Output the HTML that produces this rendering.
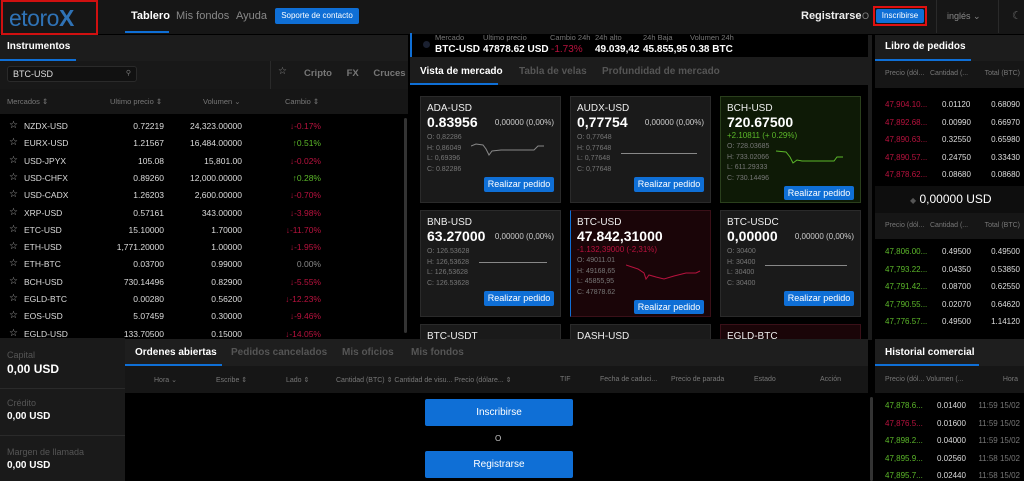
<!DOCTYPE html>
<html><head><meta charset="utf-8"><style>
*{box-sizing:border-box;margin:0;padding:0}
body{width:1024px;height:481px;overflow:hidden;background:#000;font-family:"Liberation Sans",sans-serif;color:#ddd;position:relative;font-size:9px}
.a{position:absolute}
.hdr{left:0;top:0;width:1024px;height:34px;background:#161616}
.nav{top:10px;font-size:11px;color:#888}
.btn{background:#0f6fd6;color:#fff;text-align:center;border-radius:2px}
.panel{background:#1c1c1c}
.red{color:#b8123e}.grn{color:#5cb82a}
.gray{color:#777}
.card{width:141px;height:107px;background:#1a1a1a;border:1px solid #2a2a2a}
.card .t{position:absolute;left:6px;top:6px;font-size:10px;color:#eee}
.card .p{position:absolute;left:6px;top:17px;font-size:14px;font-weight:bold;color:#fff}
.card .c{position:absolute;right:6px;top:21px;font-size:8px;color:#ccc}
.card .o{position:absolute;left:6px;font-size:7px;color:#777;line-height:10.7px}
.card .b{position:absolute;right:6px;width:70px;height:15px;font-size:9px;line-height:15px}
.row{position:absolute;left:0;width:408px;height:17px;font-size:8.5px}
.row span{position:absolute}
</style></head><body>
<div class="a hdr"></div>
<div class="a" style="left:1px;top:0;width:97px;height:35px;border:2px solid #d01010"></div>
<div class="a" style="left:9px;top:5px;font-size:23px;color:#2f72b5;letter-spacing:-0.5px">etoro<span style="font-weight:bold;color:#2f72b5">X</span></div>
<div class="a nav" style="left:131px;color:#fff;font-weight:bold">Tablero</div>
<div class="a" style="left:125px;top:31px;width:44px;height:2px;background:#0f6fd6"></div>
<div class="a nav" style="left:176px">Mis fondos</div>
<div class="a nav" style="left:236px">Ayuda</div>
<div class="a btn" style="left:275px;top:8px;width:84px;height:16px;font-size:8px;line-height:16px">Soporte de contacto</div>
<div class="a" style="left:801px;top:10px;font-size:11px;font-weight:bold;color:#eee">Registrarse</div>
<div class="a" style="left:862px;top:11px;font-size:9px;color:#888">O</div>
<div class="a" style="left:873px;top:6px;width:54px;height:20px;border:2px solid #e01010"></div>
<div class="a btn" style="left:876px;top:9px;width:48px;height:14px;font-size:8px;line-height:14px">Inscribirse</div>
<div class="a" style="left:936px;top:0;width:1px;height:33px;background:#2a2a2a"></div>
<div class="a" style="left:947px;top:11px;font-size:9px;color:#888">inglés ⌄</div>
<div class="a" style="left:998px;top:0;width:1px;height:33px;background:#2a2a2a"></div>
<div class="a" style="left:1012px;top:9px;font-size:11px;color:#666">☾</div>

<!-- left panel -->
<div class="a panel" style="left:0;top:35px;width:408px;height:54px"></div>
<div class="a" style="left:7px;top:41px;font-size:10px;font-weight:bold;color:#fff">Instrumentos</div>
<div class="a" style="left:0;top:59px;width:76px;height:2px;background:#0f6fd6"></div>
<div class="a" style="left:0;top:61px;width:408px;height:28px;background:#181818"></div>
<div class="a" style="left:7px;top:66px;width:130px;height:16px;background:#111;border:1px solid #2a2a2a;border-radius:3px;font-size:9px;color:#ddd;padding:2px 5px">BTC-USD<span style="float:right;color:#777;font-size:7px">⚲</span></div>
<div class="a" style="left:270px;top:61px;width:1px;height:28px;background:#2a2a2a"></div>
<div class="a" style="left:278px;top:66px;font-size:10px;color:#888">☆</div>
<div class="a" style="left:304px;top:68px;font-size:9.5px;color:#777;font-weight:bold;word-spacing:12px">Cripto FX Cruces</div>
<div class="a" style="left:0;top:89px;width:408px;height:25px;background:#161616"></div>
<div class="a gray" style="left:7px;top:97px;font-size:7.5px">Mercados ⇕</div>
<div class="a gray" style="left:110px;top:97px;font-size:7.5px">Ultimo precio ⇕</div>
<div class="a gray" style="left:203px;top:97px;font-size:7.5px">Volumen ⌄</div>
<div class="a gray" style="left:285px;top:97px;font-size:7.5px">Cambio ⇕</div>
<div class="a" style="left:404px;top:118px;width:3px;height:215px;background:#333;border-radius:2px"></div>

<div id="rows" class="a" style="left:0;top:0;width:408px;height:338px;overflow:hidden"></div>
<script>
var d=[["NZDX-USD","0.72219","24,323.00000","-0.17%",0],["EURX-USD","1.21567","16,484.00000","0.51%",1],["USD-JPYX","105.08","15,801.00","-0.02%",0],["USD-CHFX","0.89260","12,000.00000","0.28%",1],["USD-CADX","1.26203","2,600.00000","-0.70%",0],["XRP-USD","0.57161","343.00000","-3.98%",0],["ETC-USD","15.10000","1.70000","-11.70%",0],["ETH-USD","1,771.20000","1.00000","-1.95%",0],["ETH-BTC","0.03700","0.99000","0.00%",2],["BCH-USD","730.14496","0.82900","-5.55%",0],["EGLD-BTC","0.00280","0.56200","-12.23%",0],["EOS-USD","5.07459","0.30000","-9.46%",0],["EGLD-USD","133.70500","0.15000","-14.05%",0]];
var h="";d.forEach(function(r,i){var y=121+i*17.3;var c=r[4]==0?"#b8123e":r[4]==1?"#5cb82a":"#888";var ar=r[4]==0?"↓":r[4]==1?"↑":"";
h+='<div class="row" style="top:'+y+'px"><span style="left:9px;color:#aaa;font-size:10px;top:-1px">☆</span><span style="left:24px;color:#ddd">'+r[0]+'</span><span style="right:244px;color:#ddd">'+r[1]+'</span><span style="right:166px;color:#ddd">'+r[2]+'</span><span style="right:87px;color:'+c+'">'+ar+r[3]+'</span></div>';});
document.getElementById("rows").innerHTML=h;
</script>

<!-- middle ticker -->
<div class="a" style="left:410px;top:33px;width:2px;height:24px;background:#0f6fd6"></div>
<div class="a" style="left:423px;top:41px;width:7px;height:7px;border-radius:50%;background:#1a2030"></div>
<div class="a gray" style="left:435px;top:33px;font-size:7.5px">Mercado</div>
<div class="a gray" style="left:483px;top:33px;font-size:7.5px">Ultimo precio</div>
<div class="a gray" style="left:550px;top:33px;font-size:7.5px">Cambio 24h</div>
<div class="a gray" style="left:595px;top:33px;font-size:7.5px">24h alto</div>
<div class="a gray" style="left:643px;top:33px;font-size:7.5px">24h Baja</div>
<div class="a gray" style="left:690px;top:33px;font-size:7.5px">Volumen 24h</div>
<div class="a" style="left:435px;top:44px;font-size:10px;font-weight:bold;color:#fff">BTC-USD</div>
<div class="a" style="left:483px;top:44px;font-size:10px;font-weight:bold;color:#fff">47878.62 USD</div>
<div class="a red" style="left:551px;top:44px;font-size:10px">-1.73%</div>
<div class="a" style="left:595px;top:44px;font-size:10px;font-weight:bold;color:#fff">49.039,42</div>
<div class="a" style="left:643px;top:44px;font-size:10px;font-weight:bold;color:#fff">45.855,95</div>
<div class="a" style="left:690px;top:44px;font-size:10px;font-weight:bold;color:#fff">0.38 BTC</div>
<div class="a panel" style="left:410px;top:57px;width:458px;height:28px"></div>
<div class="a" style="left:420px;top:66px;font-size:10px;font-weight:bold;color:#fff">Vista de mercado</div>
<div class="a" style="left:410px;top:83px;width:88px;height:2px;background:#0f6fd6"></div>
<div class="a" style="left:519px;top:66px;font-size:10px;font-weight:bold;color:#555">Tabla de velas</div>
<div class="a" style="left:602px;top:66px;font-size:10px;font-weight:bold;color:#555">Profundidad de mercado</div>
<div class="a" style="left:868px;top:35px;width:4px;height:305px;background:#1c1c1c"></div>

<!-- cards -->
<div class="a card" style="left:420px;top:96px"><div class="t">ADA-USD</div><div class="p">0.83956</div><div class="c">0,00000 (0,00%)</div><div class="o" style="top:36px">O: 0,82286<br>H: 0,86049<br>L: 0,69396<br>C: 0.82286</div><svg class="a" style="left:50px;top:44px" width="80" height="20"><polyline points="0,5 5,3 12,4 15,8 18,14 21,10 30,9 45,9 63,9 67,5 73,5" fill="none" stroke="#888" stroke-width="1"/></svg><div class="btn b" style="top:80px">Realizar pedido</div></div>
<div class="a card" style="left:570px;top:96px"><div class="t">AUDX-USD</div><div class="p">0,77754</div><div class="c">0,00000 (0,00%)</div><div class="o" style="top:36px">O: 0,77648<br>H: 0,77648<br>L: 0,77648<br>C: 0,77648</div><div class="a" style="left:50px;top:56px;width:76px;height:1px;background:#888"></div><div class="btn b" style="top:80px">Realizar pedido</div></div>
<div class="a card" style="left:720px;top:96px;background:#0e1a06;border-color:#2a3f1c"><div class="t">BCH-USD</div><div class="p">720.67500</div><div class="c" style="left:6px;right:auto;top:34px;color:#5cb82a">+2.10811 (+ 0.29%)</div><div class="o" style="top:45px">O: 728.03685<br>H: 733.02066<br>L: 611.29333<br>C: 730.14496</div><svg class="a" style="left:55px;top:52px" width="80" height="20"><polyline points="0,2 10,3 14,8 17,14 21,11 26,12 50,12 58,12 61,8 67,8" fill="none" stroke="#5cb82a" stroke-width="1"/></svg><div class="btn b" style="top:89px;height:14px">Realizar pedido</div></div>

<div class="a card" style="left:420px;top:210px"><div class="t">BNB-USD</div><div class="p">63.27000</div><div class="c">0,00000 (0,00%)</div><div class="o" style="top:36px">O: 126.53628<br>H: 126,53628<br>L: 126,53628<br>C: 126.53628</div><div class="a" style="left:58px;top:51px;width:68px;height:1px;background:#888"></div><div class="btn b" style="top:80px">Realizar pedido</div></div>
<div class="a card" style="left:570px;top:210px;background:#1a0508;border-color:#3a1018;border-left:1px solid #0f6fd6"><div class="t">BTC-USD</div><div class="p">47.842,31000</div><div class="c" style="left:6px;right:auto;top:34px;color:#b8123e">-1.132,39000 (-2,31%)</div><div class="o" style="top:45px">O: 49011.01<br>H: 49168,65<br>L: 45855,95<br>C: 47878.62</div><svg class="a" style="left:55px;top:52px" width="80" height="22"><polyline points="0,2 6,4 12,6 18,10 20,16 23,12 30,14 38,16 48,13 60,10 70,10 74,8" fill="none" stroke="#b8123e" stroke-width="1"/></svg><div class="btn b" style="top:89px;height:14px">Realizar pedido</div></div>
<div class="a card" style="left:720px;top:210px"><div class="t">BTC-USDC</div><div class="p">0,00000</div><div class="c">0,00000 (0,00%)</div><div class="o" style="top:36px">O: 30400<br>H: 30400<br>L: 30400<br>C: 30400</div><div class="a" style="left:44px;top:54px;width:82px;height:1px;background:#888"></div><div class="btn b" style="top:80px">Realizar pedido</div></div>
<div class="a card" style="left:420px;top:324px;height:20px"><div class="t">BTC-USDT</div></div>
<div class="a card" style="left:570px;top:324px;height:20px"><div class="t">DASH-USD</div></div>
<div class="a card" style="left:720px;top:324px;height:20px;background:#1a0508;border-color:#3a1018"><div class="t">EGLD-BTC</div></div>

<!-- right orderbook -->
<div class="a panel" style="left:875px;top:35px;width:149px;height:26px"></div>
<div class="a" style="left:885px;top:41px;font-size:10px;font-weight:bold;color:#fff">Libro de pedidos</div>
<div class="a" style="left:875px;top:59px;width:96px;height:2px;background:#0f6fd6"></div>
<div class="a" style="left:875px;top:61px;width:149px;height:27px;background:#161616"></div>
<div class="a" style="left:875px;top:213px;width:149px;height:26px;background:#161616"></div>
<div class="a" style="left:875px;top:186px;width:149px;height:27px;background:#0e0e0e"></div>
<div class="a" style="left:910px;top:192px;font-size:12px;color:#fff"><span style="color:#555;font-size:8px">◆</span> 0,00000 USD</div>
<div id="ob"></div>
<script>
var s="";
function hdr(y,a,b,c){s+='<div class="a gray" style="left:885px;top:'+y+'px;font-size:7px">'+a+'</div><div class="a gray" style="left:930px;top:'+y+'px;font-size:7px">'+b+'</div><div class="a gray" style="right:4px;top:'+y+'px;font-size:7px">'+c+'</div>';}
hdr(70,"Precio (dól...","Cantidad (...","Total (BTC)");hdr(222,"Precio (dól...","Cantidad (...","Total (BTC)");
var A=[["47,904.10...","0.01120","0.68090"],["47,892.68...","0.00990","0.66970"],["47,890.63...","0.32550","0.65980"],["47,890.57...","0.24750","0.33430"],["47,878.62...","0.08680","0.08680"]];
A.forEach(function(r,i){var y=100+i*17.5;s+='<div class="a red" style="left:885px;top:'+y+'px;font-size:8px">'+r[0]+'</div><div class="a" style="left:942px;top:'+y+'px;font-size:8px;color:#ddd">'+r[1]+'</div><div class="a" style="right:4px;top:'+y+'px;font-size:8px;color:#ddd">'+r[2]+'</div>';});
var B=[["47,806.00...","0.49500","0.49500"],["47,793.22...","0.04350","0.53850"],["47,791.42...","0.08700","0.62550"],["47,790.55...","0.02070","0.64620"],["47,776.57...","0.49500","1.14120"]];
B.forEach(function(r,i){var y=247+i*17.5;s+='<div class="a grn" style="left:885px;top:'+y+'px;font-size:8px">'+r[0]+'</div><div class="a" style="left:942px;top:'+y+'px;font-size:8px;color:#ddd">'+r[1]+'</div><div class="a" style="right:4px;top:'+y+'px;font-size:8px;color:#ddd">'+r[2]+'</div>';});
var T=[["47,878.6...","0.01400","11:59 15/02",1],["47,876.5...","0.01600","11:59 15/02",0],["47,898.2...","0.04000","11:59 15/02",1],["47,895.9...","0.02560","11:58 15/02",1],["47,895.7...","0.02440","11:58 15/02",1]];
T.forEach(function(r,i){var y=401+i*17.5;s+='<div class="a '+(r[3]?'grn':'red')+'" style="left:885px;top:'+y+'px;font-size:8px">'+r[0]+'</div><div class="a" style="left:937px;top:'+y+'px;font-size:8px;color:#ddd">'+r[1]+'</div><div class="a gray" style="right:4px;top:'+y+'px;font-size:8px">'+r[2]+'</div>';});
document.getElementById("ob").innerHTML=s;
</script>

<!-- bottom -->
<div class="a" style="left:0;top:338px;width:125px;height:143px;background:#1a1a1a"></div>
<div class="a" style="left:0;top:388px;width:125px;height:1px;background:#2a2a2a"></div>
<div class="a" style="left:0;top:435px;width:125px;height:1px;background:#2a2a2a"></div>
<div class="a" style="left:7px;top:350px;font-size:9px;color:#555">Capital</div>
<div class="a" style="left:7px;top:362px;font-size:12px;font-weight:bold;color:#fff">0,00 USD</div>
<div class="a" style="left:7px;top:398px;font-size:9px;color:#555">Crédito</div>
<div class="a" style="left:7px;top:411px;font-size:10px;font-weight:bold;color:#fff">0,00 USD</div>
<div class="a" style="left:7px;top:447px;font-size:9px;color:#555">Margen de llamada</div>
<div class="a" style="left:7px;top:460px;font-size:10px;font-weight:bold;color:#fff">0,00 USD</div>
<div class="a panel" style="left:125px;top:339px;width:743px;height:27px;background:#1e1e1e"></div>
<div class="a" style="left:135px;top:347px;font-size:10px;font-weight:bold;color:#fff">Ordenes abiertas</div>
<div class="a" style="left:125px;top:364px;width:97px;height:2px;background:#0f6fd6"></div>
<div class="a" style="left:231px;top:347px;font-size:10px;font-weight:bold;color:#555">Pedidos cancelados</div>
<div class="a" style="left:342px;top:347px;font-size:10px;font-weight:bold;color:#555">Mis oficios</div>
<div class="a" style="left:411px;top:347px;font-size:10px;font-weight:bold;color:#555">Mis fondos</div>
<div class="a" style="left:125px;top:366px;width:743px;height:27px;background:#161616"></div>
<div class="a gray" style="left:154px;top:376px;font-size:7px">Hora ⌄</div>
<div class="a gray" style="left:216px;top:376px;font-size:7px">Escribe ⇕</div>
<div class="a gray" style="left:286px;top:376px;font-size:7px">Lado ⇕</div>
<div class="a gray" style="left:336px;top:376px;font-size:7px">Cantidad (BTC) ⇕ Cantidad de visu... Precio (dólare... ⇕</div>
<div class="a gray" style="left:560px;top:376px;font-size:7px">TIF</div>
<div class="a gray" style="left:600px;top:376px;font-size:7px">Fecha de caduci...</div>
<div class="a gray" style="left:671px;top:376px;font-size:7px">Precio de parada</div>
<div class="a gray" style="left:754px;top:376px;font-size:7px">Estado</div>
<div class="a gray" style="left:820px;top:376px;font-size:7px">Acción</div>
<div class="a btn" style="left:425px;top:399px;width:148px;height:27px;line-height:27px;font-size:10px">Inscribirse</div>
<div class="a" style="left:495px;top:434px;font-size:8px;color:#ccc">O</div>
<div class="a btn" style="left:425px;top:451px;width:148px;height:27px;line-height:27px;font-size:10px">Registrarse</div>
<div class="a" style="left:870px;top:397px;width:3px;height:84px;background:#333;border-radius:2px"></div>
<div class="a panel" style="left:875px;top:339px;width:149px;height:27px;background:#1e1e1e"></div>
<div class="a" style="left:885px;top:347px;font-size:10px;font-weight:bold;color:#fff">Historial comercial</div>
<div class="a" style="left:875px;top:364px;width:104px;height:2px;background:#0f6fd6"></div>
<div class="a" style="left:875px;top:366px;width:149px;height:27px;background:#161616"></div>
<div class="a gray" style="left:885px;top:376px;font-size:7px">Precio (dól... Volumen (...</div>
<div class="a gray" style="right:6px;top:376px;font-size:7px">Hora</div>
</body></html>
